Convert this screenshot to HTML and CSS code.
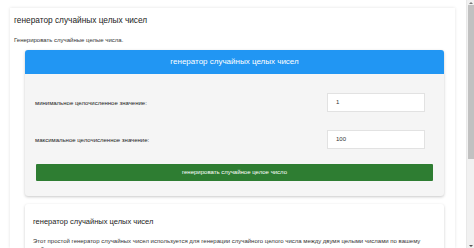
FILE: index.html
```html
<!DOCTYPE html>
<html lang="ru">
<head>
<meta charset="utf-8">
<title>генератор случайных целых чисел</title>
<link rel="stylesheet" href="styles.css">
</head>
<body>
<div class="page">
  <div class="panel">
    <h1 class="title">генератор случайных целых чисел</h1>
    <p class="sub">Генерировать случайные целые числа.</p>
    <div class="card">
      <div class="card-head">генератор случайных целых чисел</div>
      <div class="card-body">
        <div class="row">
          <label class="lbl">минимальное целочисленное значение:</label>
          <div class="inp">1</div>
        </div>
        <div class="row row2">
          <label class="lbl">максимальное целочисленное значение:</label>
          <div class="inp">100</div>
        </div>
        <div class="btn">генерировать случайное целое число</div>
      </div>
    </div>
    <div class="card2">
      <h2 class="title2">генератор случайных целых чисел</h2>
      <p class="para">Этот простой генератор случайных чисел используется для генерации случайного целого числа между двумя целыми числами по вашему выбору.</p>
    </div>
  </div>
</div>
<div class="scrollbar">
  <div class="arrow-up"></div>
  <div class="thumb"></div>
  <div class="track"></div>
  <div class="arrow-down"></div>
</div>
</body>
</html>
```
FILE: styles.css
```css
html, body {
  margin: 0;
  padding: 0;
}
body {
  width: 474px;
  height: 248px;
  overflow: hidden;
  display: flex;
  background: #ffffff;
  font-family: "Liberation Sans", Arial, sans-serif;
  color: #222;
}
.page {
  flex: 1;
  padding: 8px 11px 0 10px;
  min-width: 0;
}
.panel {
  background: #fff;
  box-shadow: 0 0 3px rgba(0,0,0,0.12);
  padding: 0 11px 20px 4px;
  height: 100%;
  box-sizing: border-box;
}
.title {
  margin: 0;
  padding-top: 5.5px;
  font-size: 8.3px;
  line-height: 12px;
  font-weight: normal;
  color: #222;
}
.sub {
  margin: 10px 0 0 0;
  font-size: 6px;
  line-height: 8px;
  color: #333;
}
.card {
  margin: 6.5px 0 0 11px;
  border-radius: 3px;
  box-shadow: 0 1px 3px rgba(0,0,0,0.22);
  background: #f5f5f5;
}
.card-head {
  height: 24px;
  line-height: 24px;
  background: #2196f3;
  color: #fff;
  text-align: center;
  font-size: 8px;
  border-radius: 3px 3px 0 0;
}
.card-body {
  padding: 19px 11px 15px 11px;
}
.row {
  display: flex;
  justify-content: space-between;
  align-items: center;
  padding-right: 8px;
  height: 19px;
}
.row2 {
  margin-top: 18px;
}
.lbl {
  font-size: 6px;
  color: #222;
  margin-left: -1px;
}
.inp {
  width: 98px;
  height: 19px;
  box-sizing: border-box;
  background: #fff;
  border: 1px solid #e2e2e2;
  font-size: 6px;
  line-height: 17px;
  padding-left: 8px;
  color: #333;
}
.btn {
  margin-top: 15px;
  height: 17px;
  line-height: 17px;
  background: #2e7d32;
  color: #fff;
  text-align: center;
  font-size: 6px;
  border-radius: 1px;
}
.card2 {
  margin: 8px 0 0 11px;
  background: #fff;
  border-radius: 3px;
  box-shadow: 0 1px 3px rgba(0,0,0,0.2);
  padding: 12.7px 10px 10px 8px;
}
.title2 {
  margin: 0;
  font-size: 7.5px;
  line-height: 10px;
  font-weight: normal;
  color: #222;
}
.para {
  margin: 10px 0 0 0;
  font-size: 6px;
  line-height: 8px;
  color: #333;
}
.scrollbar {
  width: 7px;
  flex: none;
  display: flex;
  flex-direction: column;
  background: #f1f1f1;
  border-left: 1px solid #e8e8e8;
}
.arrow-up, .arrow-down {
  height: 5px;
  display: flex;
  justify-content: center;
  align-items: center;
}
.arrow-up::before {
  content: "";
  border-left: 2px solid transparent;
  border-right: 2px solid transparent;
  border-bottom: 2px solid #777;
}
.arrow-down::before {
  content: "";
  border-left: 2px solid transparent;
  border-right: 2px solid transparent;
  border-top: 2px solid #555;
}
.thumb {
  height: 154px;
  background: #c1c1c1;
  margin-left: 1px;
}
.track {
  flex: 1;
}
```
